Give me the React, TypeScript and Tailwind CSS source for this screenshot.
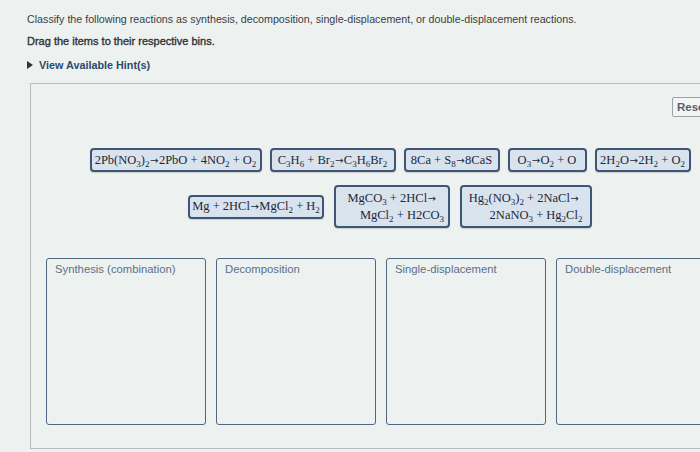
import React from "react";

const serif = "font-['Liberation_Serif','Times_New_Roman',serif]";

function Chip({ w, children, tall }: { w: string; children: React.ReactNode; tall?: boolean }) {
  return (
    <div
      className={`${w} ${tall ? "py-[3px]" : "h-[24px]"} flex flex-col items-center justify-center rounded-[4px] border-2 border-[#3d5675] bg-[#d9e3ee] text-[12.5px] leading-[16px] text-[#1d2838] shadow-[0_1px_1px_rgba(0,0,0,0.15)] ${serif} whitespace-nowrap`}
    >
      {children}
    </div>
  );
}

const S = ({ children }: { children: React.ReactNode }) => (
  <sub className="text-[9px] align-[-1px] leading-none">{children}</sub>
);

const A = () => (
  <span className="font-['DejaVu_Sans',sans-serif] text-[10px] mx-[0.5px]">→</span>
);

function Bin({ label }: { label: string }) {
  return (
    <div className="w-[160px] h-[167px] shrink-0 rounded-[3px] border border-[#4f6680] px-[8px] pt-[2px] text-[11.3px] text-[#5b6e88]">
      {label}
    </div>
  );
}

export default function App() {
  return (
    <div className="w-[700px] h-[452px] overflow-hidden bg-[#edf2f0] font-['Liberation_Sans',Arial,sans-serif] text-[#3a3d42]">
      <div className="pl-[27px] pt-[12px]">
        <p className="text-[10.7px] leading-[14px]">
          Classify the following reactions as synthesis, decomposition, single-displacement, or double-displacement reactions.
        </p>
        <p className="mt-[8px] text-[11px] leading-[14px] text-[#2f3338] [-webkit-text-stroke:0.35px_#2f3338]">
          Drag the items to their respective bins.
        </p>
        <div className="mt-[10px] flex items-center gap-[6px]">
          <svg width="6" height="8" viewBox="0 0 6 8" className="ml-[0px]">
            <path d="M0 0 L6 4 L0 8 Z" fill="#2c3440" />
          </svg>
          <span className="text-[10.8px] leading-[14px] font-bold text-[#2c4a6c]">View Available Hint(s)</span>
        </div>
      </div>

      <div className="ml-[30px] mt-[11px] w-[720px] h-[366px] border border-[#b5bfbf] flex flex-col">
        <div className="flex justify-end pr-[35px] pt-[13px]">
          <div className="w-[42px] h-[20px] rounded-[2px] border border-[#9aa3a8] bg-[#f3f5f4] pl-[4px] text-[11.5px] leading-[18px] font-bold text-[#5a5f66]">
            Reset
          </div>
        </div>

        <div className="mt-[31px] flex justify-center gap-[8px]">
          <Chip w="w-[172px]">
            <span>
              2Pb(NO<S>3</S>)<S>2</S><A />2PbO + 4NO<S>2</S> + O<S>2</S>
            </span>
          </Chip>
          <Chip w="w-[126px]">
            <span>
              C<S>3</S>H<S>6</S> + Br<S>2</S><A />C<S>3</S>H<S>6</S>Br<S>2</S>
            </span>
          </Chip>
          <Chip w="w-[96px]">
            <span>
              8Ca + S<S>8</S><A />8CaS
            </span>
          </Chip>
          <Chip w="w-[79px]">
            <span>
              O<S>3</S><A />O<S>2</S> + O
            </span>
          </Chip>
          <Chip w="w-[96px]">
            <span>
              2H<S>2</S>O<A />2H<S>2</S> + O<S>2</S>
            </span>
          </Chip>
        </div>

        <div className="mt-[13px] flex justify-center items-center gap-[10px]">
          <Chip w="w-[136px]">
            <span>
              Mg + 2HCl<A />MgCl<S>2</S> + H<S>2</S>
            </span>
          </Chip>
          <Chip w="w-[116px]" tall>
            <span>
              MgCO<S>3</S> + 2HCl<A />
            </span>
            <span className="pl-[20px]">
              MgCl<S>2</S> + H2CO<S>3</S>
            </span>
          </Chip>
          <Chip w="w-[132px]" tall>
            <span className="pr-[4px]">
              Hg<S>2</S>(NO<S>3</S>)<S>2</S> + 2NaCl<A />
            </span>
            <span className="pl-[20px]">
              2NaNO<S>3</S> + Hg<S>2</S>Cl<S>2</S>
            </span>
          </Chip>
        </div>

        <div className="mt-[30px] ml-[15px] flex gap-[10px]">
          <Bin label="Synthesis (combination)" />
          <Bin label="Decomposition" />
          <Bin label="Single-displacement" />
          <Bin label="Double-displacement" />
        </div>
      </div>
    </div>
  );
}
